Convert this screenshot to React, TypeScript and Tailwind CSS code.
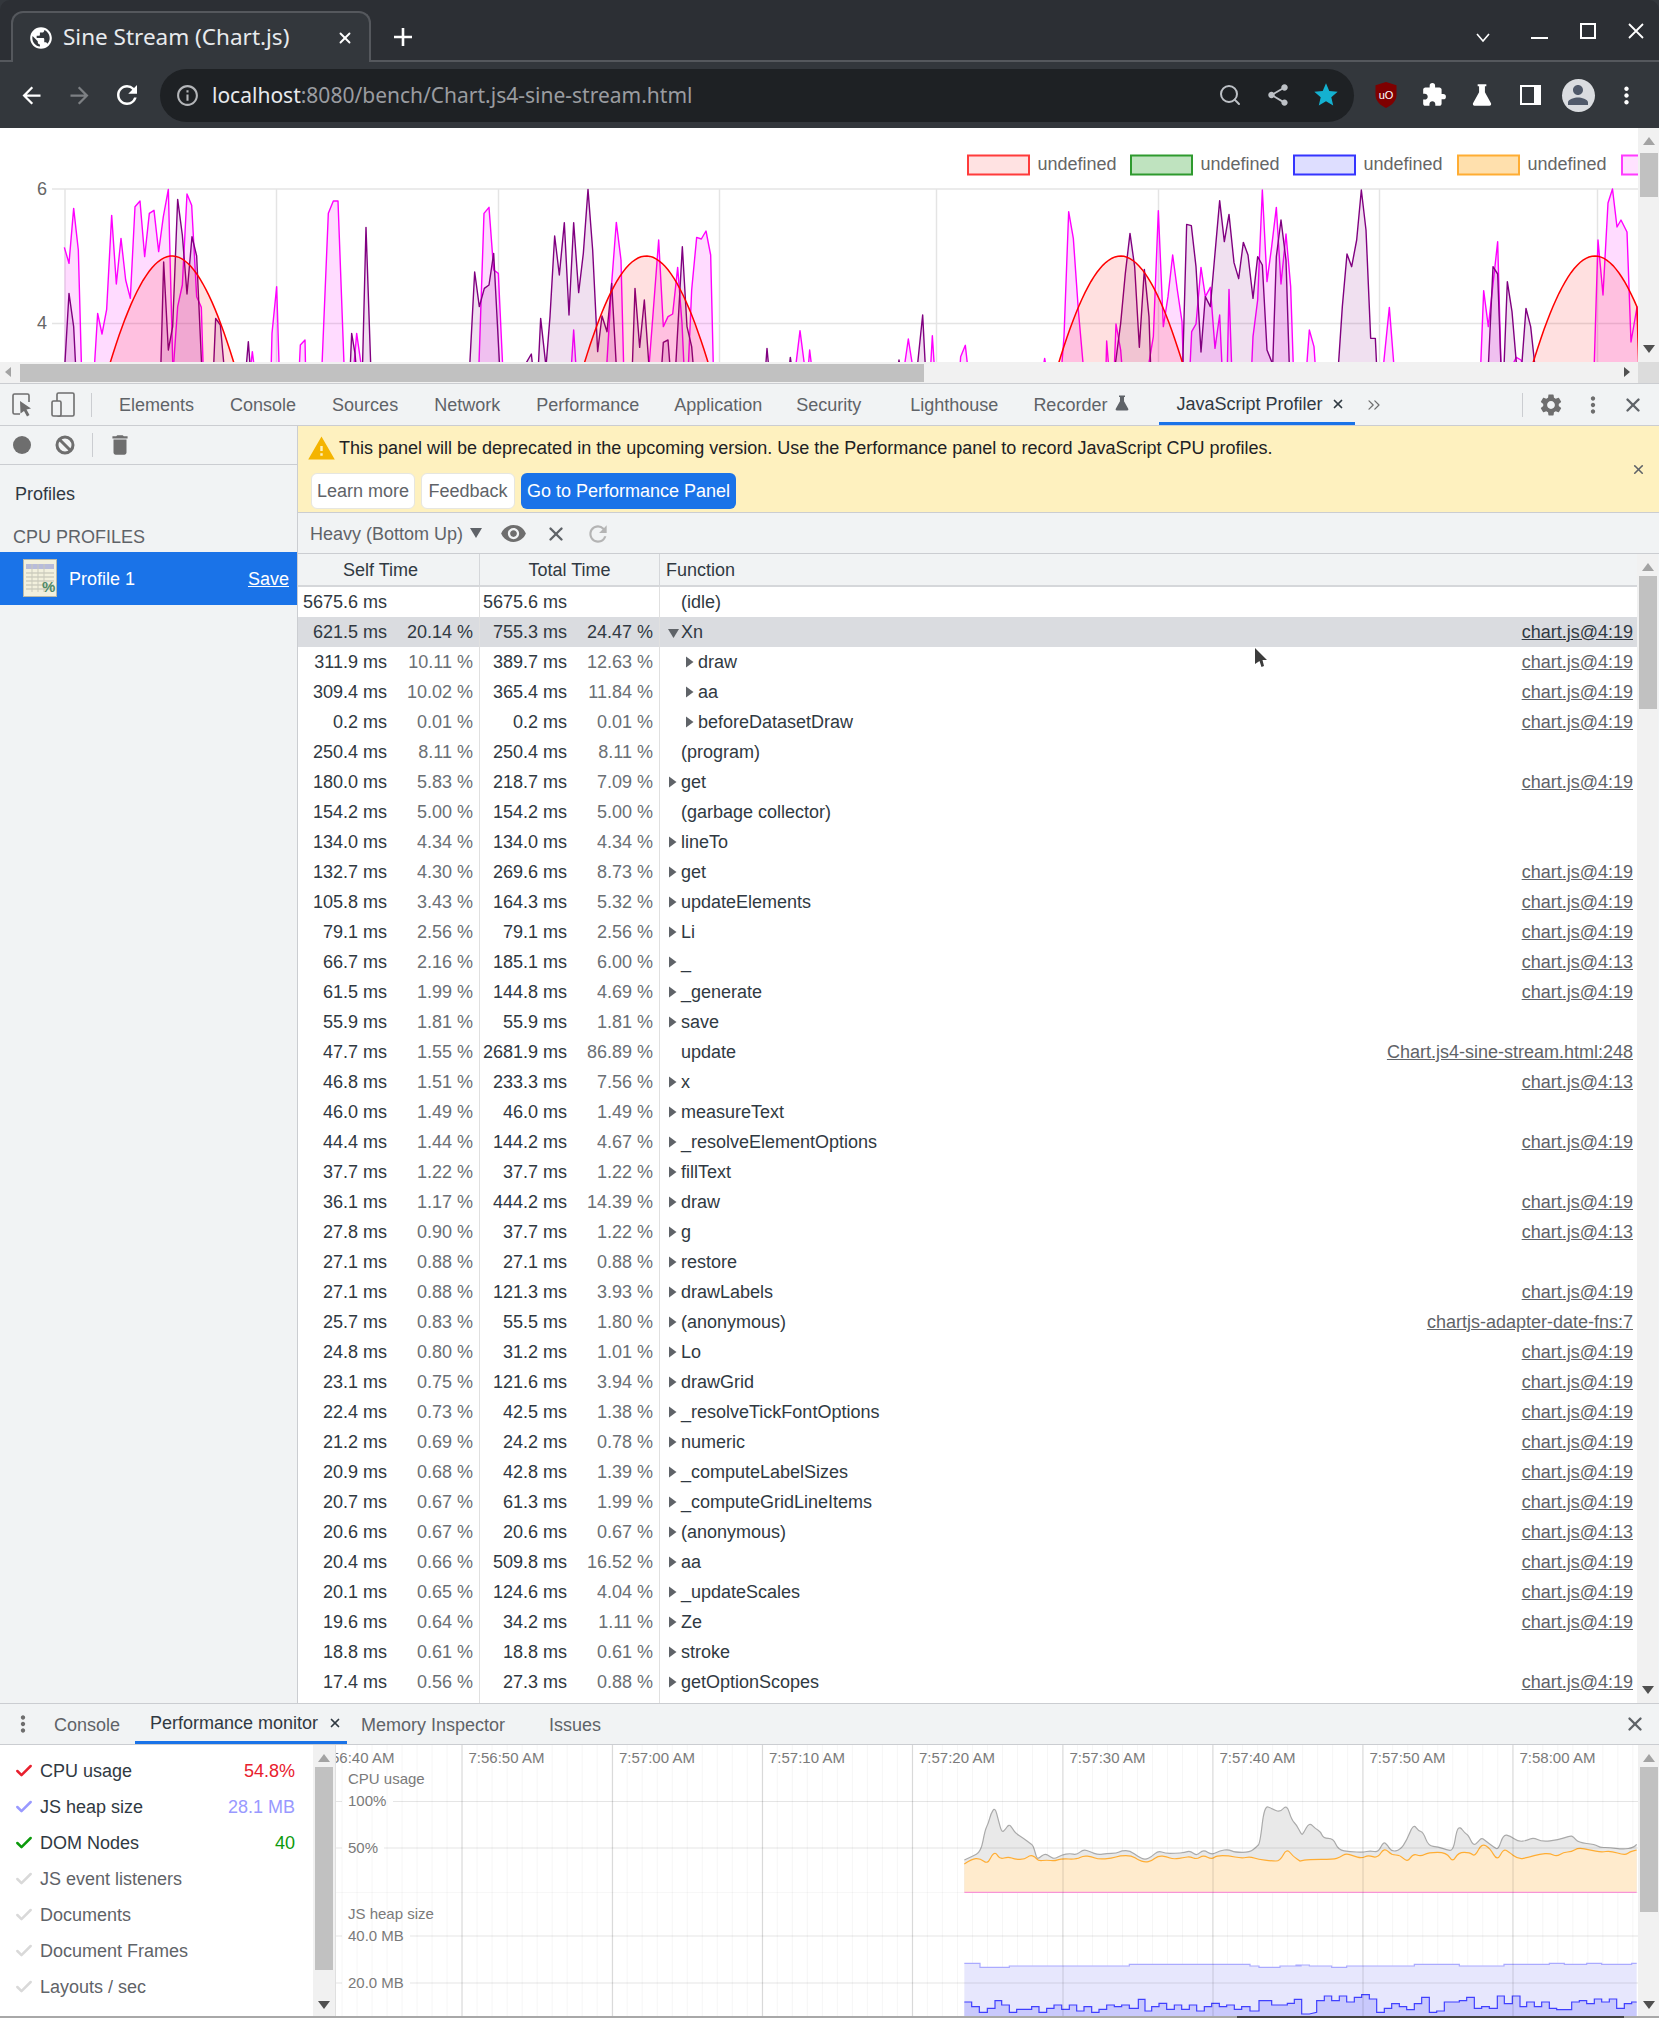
import { Check, ChevronsRight, Search, X } from 'lucide-react'
import { ReactNode } from 'react'
import {
  MdArrowBack,
  MdArrowForward,
  MdDelete,
  MdExtension,
  MdInfoOutline,
  MdMoreVert,
  MdPerson,
  MdPublic,
  MdRefresh,
  MdSettings,
  MdShare,
  MdStar,
  MdVisibility,
  MdWarning,
} from 'react-icons/md'

type Row = [string, string, string, string, string, string, number?]

const J19 = 'chart.js@4:19'
const J13 = 'chart.js@4:13'

// self, self %, total, total %, name, link. last: 0 no arrow, 1 arrow, 2 open, 3 child
const rows: Row[] = [
  ['5675.6 ms', '', '5675.6 ms', '', '(idle)', '', 0],
  ['621.5 ms', '20.14 %', '755.3 ms', '24.47 %', 'Xn', J19, 2],
  ['311.9 ms', '10.11 %', '389.7 ms', '12.63 %', 'draw', J19, 3],
  ['309.4 ms', '10.02 %', '365.4 ms', '11.84 %', 'aa', J19, 3],
  ['0.2 ms', '0.01 %', '0.2 ms', '0.01 %', 'beforeDatasetDraw', J19, 3],
  ['250.4 ms', '8.11 %', '250.4 ms', '8.11 %', '(program)', '', 0],
  ['180.0 ms', '5.83 %', '218.7 ms', '7.09 %', 'get', J19],
  ['154.2 ms', '5.00 %', '154.2 ms', '5.00 %', '(garbage collector)', '', 0],
  ['134.0 ms', '4.34 %', '134.0 ms', '4.34 %', 'lineTo', ''],
  ['132.7 ms', '4.30 %', '269.6 ms', '8.73 %', 'get', J19],
  ['105.8 ms', '3.43 %', '164.3 ms', '5.32 %', 'updateElements', J19],
  ['79.1 ms', '2.56 %', '79.1 ms', '2.56 %', 'Li', J19],
  ['66.7 ms', '2.16 %', '185.1 ms', '6.00 %', '_', J13],
  ['61.5 ms', '1.99 %', '144.8 ms', '4.69 %', '_generate', J19],
  ['55.9 ms', '1.81 %', '55.9 ms', '1.81 %', 'save', ''],
  ['47.7 ms', '1.55 %', '2681.9 ms', '86.89 %', 'update', 'Chart.js4-sine-stream.html:248', 0],
  ['46.8 ms', '1.51 %', '233.3 ms', '7.56 %', 'x', J13],
  ['46.0 ms', '1.49 %', '46.0 ms', '1.49 %', 'measureText', ''],
  ['44.4 ms', '1.44 %', '144.2 ms', '4.67 %', '_resolveElementOptions', J19],
  ['37.7 ms', '1.22 %', '37.7 ms', '1.22 %', 'fillText', ''],
  ['36.1 ms', '1.17 %', '444.2 ms', '14.39 %', 'draw', J19],
  ['27.8 ms', '0.90 %', '37.7 ms', '1.22 %', 'g', J13],
  ['27.1 ms', '0.88 %', '27.1 ms', '0.88 %', 'restore', ''],
  ['27.1 ms', '0.88 %', '121.3 ms', '3.93 %', 'drawLabels', J19],
  ['25.7 ms', '0.83 %', '55.5 ms', '1.80 %', '(anonymous)', 'chartjs-adapter-date-fns:7'],
  ['24.8 ms', '0.80 %', '31.2 ms', '1.01 %', 'Lo', J19],
  ['23.1 ms', '0.75 %', '121.6 ms', '3.94 %', 'drawGrid', J19],
  ['22.4 ms', '0.73 %', '42.5 ms', '1.38 %', '_resolveTickFontOptions', J19],
  ['21.2 ms', '0.69 %', '24.2 ms', '0.78 %', 'numeric', J19],
  ['20.9 ms', '0.68 %', '42.8 ms', '1.39 %', '_computeLabelSizes', J19],
  ['20.7 ms', '0.67 %', '61.3 ms', '1.99 %', '_computeGridLineItems', J19],
  ['20.6 ms', '0.67 %', '20.6 ms', '0.67 %', '(anonymous)', J13],
  ['20.4 ms', '0.66 %', '509.8 ms', '16.52 %', 'aa', J19],
  ['20.1 ms', '0.65 %', '124.6 ms', '4.04 %', '_updateScales', J19],
  ['19.6 ms', '0.64 %', '34.2 ms', '1.11 %', 'Ze', J19],
  ['18.8 ms', '0.61 %', '18.8 ms', '0.61 %', 'stroke', ''],
  ['17.4 ms', '0.56 %', '27.3 ms', '0.88 %', 'getOptionScopes', J19],
]

// traced chart segments, [x, y, x, y...] relative to a base point and a scale
const seg = (bx: number, by: number, s: number, raw: number[]) => {
  const out: string[] = []
  for (let i = 0; i < raw.length; i += 2) out.push(`${bx + raw[i] / s},${by + raw[i + 1] / s}`)
  return out.join(' ')
}
const a = (raw: number[]) => seg(0, 120, 3, raw)
const b = (raw: number[]) => seg(500, 180, 3, raw)
const c = (raw: number[]) => seg(1020, 180, 3, raw)

const magenta = [
  a([193, 382, 207, 430, 221, 265, 235, 390, 245, 760]),
  a([282, 760, 293, 580, 306, 642, 320, 568, 335, 286, 349, 492, 363, 355, 377, 480, 391, 535, 405, 260, 420, 243, 434, 410, 448, 280, 462, 271, 476, 395, 490, 290, 505, 208, 519, 760]),
  a([519, 760, 533, 560, 547, 495, 561, 222, 575, 256, 590, 530, 604, 562, 610, 760]),
  a([750, 760, 757, 695, 765, 760]),
  a([813, 760, 816, 640, 830, 500, 838, 760]),
  a([897, 760, 901, 675, 915, 660, 917, 760]),
  a([965, 760, 985, 280, 1000, 243, 1014, 243, 1033, 760]),
  a([1060, 760, 1070, 640, 1087, 760]),
  a([1436, 760, 1452, 280, 1467, 262, 1481, 450, 1495, 460, 1509, 760]),
  b([214, 560, 221, 450, 228, 560]),
  b([320, 560, 335, 310, 349, 127, 363, 240, 371, 560]),
  b([447, 560, 460, 390, 476, 180, 490, 440, 504, 410, 518, 402, 533, 262, 546, 430, 552, 560]),
  b([565, 560, 575, 330, 590, 172, 604, 177, 618, 153, 632, 225, 640, 560]),
  b([887, 560, 900, 452, 914, 560]),
  b([925, 560, 929, 510, 935, 560]),
  b([1213, 560, 1225, 477, 1238, 560]),
  b([1292, 560, 1297, 467, 1303, 560]),
  b([1380, 560, 1382, 530, 1396, 496, 1403, 560]),
  c([70, 560, 74, 535, 78, 560]),
  c([125, 560, 132, 470, 146, 95, 160, 175, 175, 390, 190, 560]),
  c([258, 560, 260, 483, 266, 560]),
  c([283, 560, 288, 432, 302, 510, 306, 560]),
  c([385, 560, 400, 470, 415, 92, 430, 440, 444, 350, 458, 225, 472, 330, 486, 425, 490, 560]),
  c([510, 560, 515, 455, 528, 432, 543, 262, 556, 350, 571, 322, 585, 505, 599, 405, 606, 560]),
  c([622, 560, 627, 328, 635, 560]),
  c([695, 560, 699, 470, 713, 360, 727, 30, 741, 305, 755, 200, 769, 82, 783, 312, 798, 162, 812, 320, 820, 560]),
  c([860, 560, 868, 450, 882, 500, 886, 560]),
  c([1090, 560, 1108, 382, 1122, 560]),
  c([1382, 560, 1391, 332, 1405, 440, 1433, 185, 1443, 560]),
  c([1475, 560, 1489, 532, 1503, 540, 1510, 560]),
  seg(0, 0, 1, [1594, 372, 1598, 240, 1603, 295, 1608, 203, 1612.5, 189, 1617, 227, 1621, 220, 1627, 232, 1631, 342, 1637, 307, 1640, 372]),
]

const purple = [
  a([193, 760, 207, 520, 221, 620, 228, 760]),
  a([482, 760, 491, 426, 505, 690, 518, 620, 533, 238, 547, 345, 561, 522, 576, 350, 590, 408, 606, 760]),
  a([640, 760, 647, 595, 661, 615, 674, 760]),
  a([737, 760, 745, 665, 752, 760]),
  a([1050, 760, 1055, 640, 1065, 700, 1070, 760]),
  a([1087, 760, 1098, 322, 1113, 760]),
  a([1408, 760, 1424, 456, 1438, 560, 1453, 505, 1467, 495, 1481, 400, 1500, 760]),
  b([72, 560, 94, 522, 98, 560]),
  b([115, 560, 122, 415, 138, 560]),
  b([138, 560, 150, 410, 164, 168, 178, 285, 193, 128, 207, 405, 221, 128, 236, 338, 250, 220, 264, 28, 278, 210, 293, 515, 306, 408, 321, 455, 335, 310, 349, 560]),
  b([397, 560, 405, 325, 419, 502, 433, 360, 447, 560]),
  b([485, 560, 490, 487, 504, 480, 510, 560]),
  b([527, 560, 547, 200, 561, 440, 575, 500, 580, 560]),
  b([797, 560, 801, 505, 806, 560]),
  b([868, 560, 871, 532, 875, 560]),
  b([1194, 560, 1197, 540, 1200, 560]),
  b([1252, 560, 1268, 405, 1276, 560]),
  c([285, 560, 302, 430, 316, 280, 330, 160, 344, 260, 358, 502, 373, 268, 387, 410, 392, 560]),
  c([488, 560, 500, 133, 514, 137, 528, 260, 543, 516, 556, 350, 571, 380, 585, 220, 599, 62, 613, 185, 627, 103, 642, 248, 656, 296, 670, 187, 684, 225, 699, 355, 713, 230, 727, 255, 741, 510, 755, 545, 758, 560]),
  c([758, 560, 769, 230, 783, 120, 798, 240, 808, 560]),
  c([955, 560, 967, 380, 981, 222, 995, 260, 1010, 180, 1024, 30, 1038, 150, 1052, 475, 1066, 475, 1070, 560]),
  c([1405, 560, 1419, 260, 1433, 282, 1443, 560]),
  c([1452, 560, 1462, 305, 1476, 395, 1490, 560]),
  c([1505, 560, 1518, 385, 1532, 440, 1545, 560]),
]

const sineWave = () => {
  const out: string[] = []
  for (let x = 65; x <= 1639; x += 3) {
    const v = 5 * Math.cos((2 * Math.PI * (x - 172)) / 474.3)
    out.push(`${x},${Math.min(323.3 - 67.3 * (v - 4), 375).toFixed(1)}`)
  }
  return `65,375 ${out.join(' ')} 1639,375`
}

// perf monitor traces, first part from x=955 and second from x=1300, both at 3x from y=1800
const toPoints = (raw1: number[], raw2: number[]) => {
  const out: [number, number][] = []
  for (let i = 0; i < raw1.length; i += 2) out.push([955 + raw1[i] / 3, 1800 + raw1[i + 1] / 3])
  for (let i = 0; i < raw2.length; i += 2) out.push([1300 + raw2[i] / 3, 1800 + raw2[i + 1] / 3])
  return out
}

const smooth = (p: [number, number][]) => {
  let d = `M${p[0][0]} ${p[0][1]}`
  for (let i = 1; i < p.length - 1; i++) {
    const mx = (p[i][0] + p[i + 1][0]) / 2
    const my = (p[i][1] + p[i + 1][1]) / 2
    d += ` Q${p[i][0]} ${p[i][1]} ${mx} ${my}`
  }
  const last = p[p.length - 1]
  return `${d} L${last[0]} ${last[1]}`
}

const stepped = (p: [number, number][]) => p.map((q) => `${q[0]},${q[1]}`).join(' ')

const cpuLine = toPoints(
  [28, 180, 50, 170, 78, 155, 90, 90, 100, 70, 108, 40, 120, 22, 130, 60, 140, 97, 150, 90, 162, 72, 172, 85, 182, 100, 205, 115, 225, 130, 235, 137, 245, 175, 252, 175, 270, 160, 285, 170, 298, 177, 320, 165, 345, 160, 365, 165, 385, 148, 405, 155, 430, 165, 455, 160, 485, 160, 500, 152, 525, 152, 550, 170, 570, 180, 590, 170, 610, 152, 630, 160, 660, 160, 690, 158, 705, 152, 725, 168, 745, 148, 770, 165, 795, 152, 820, 148, 840, 157, 885, 157, 905, 140, 915, 130, 928, 17, 950, 25, 975, 38, 995, 13, 1010, 60, 1025, 75, 1040, 105],
  [10, 100, 28, 67, 45, 85, 62, 95, 70, 115, 100, 115, 115, 150, 150, 155, 190, 157, 210, 152, 235, 157, 250, 125, 262, 135, 275, 155, 300, 150, 320, 122, 340, 72, 355, 92, 370, 97, 385, 138, 415, 140, 440, 150, 460, 152, 470, 90, 480, 80, 495, 100, 505, 105, 520, 138, 535, 125, 545, 113, 560, 125, 580, 140, 595, 150, 610, 103, 630, 108, 655, 125, 680, 122, 700, 112, 725, 125, 775, 120, 810, 107, 820, 110, 835, 128, 885, 133, 900, 143, 925, 142, 970, 148, 1000, 143, 1010, 133],
)
const scriptLine = toPoints(
  [28, 192, 50, 177, 75, 175, 98, 192, 110, 165, 122, 157, 135, 178, 160, 170, 180, 178, 210, 178, 225, 165, 240, 170, 250, 183, 275, 180, 298, 183, 318, 176, 365, 178, 385, 167, 410, 170, 430, 178, 470, 175, 495, 167, 530, 167, 550, 180, 570, 187, 590, 183, 610, 167, 635, 170, 655, 178, 690, 172, 705, 170, 725, 178, 745, 165, 770, 178, 785, 167, 820, 167, 860, 175, 885, 170, 910, 178, 950, 183, 975, 183, 995, 145, 1015, 170, 1035, 183],
  [0, 183, 25, 178, 100, 178, 120, 172, 138, 160, 160, 168, 185, 175, 205, 165, 232, 175, 253, 143, 275, 165, 300, 165, 322, 187, 340, 160, 362, 170, 385, 157, 440, 157, 458, 187, 475, 157, 510, 157, 525, 170, 545, 130, 570, 145, 592, 183, 610, 147, 625, 155, 655, 178, 685, 172, 720, 162, 750, 160, 770, 170, 790, 157, 815, 155, 835, 143, 870, 150, 905, 157, 930, 152, 975, 166, 990, 155, 1010, 150],
)
const heapLine = toPoints(
  [28, 490, 75, 490, 75, 502, 163, 502, 163, 498, 523, 498, 523, 493, 885, 493, 885, 498, 912, 498, 912, 502, 975, 502, 975, 498, 1040, 498],
  [-12, 498, -12, 495, 28, 495, 28, 498, 95, 498, 95, 502, 140, 502, 140, 498, 343, 498, 343, 493, 478, 493, 478, 498, 612, 498, 612, 493, 748, 493, 748, 490, 793, 490, 793, 493, 860, 493, 860, 490, 905, 490, 905, 493, 995, 493, 995, 490, 1010, 490],
)
const domLine = toPoints(
  [28, 606, 50, 606, 50, 620, 73, 620, 73, 637, 97, 637, 97, 625, 120, 625, 120, 602, 140, 602, 140, 615, 163, 615, 163, 637, 185, 637, 185, 628, 230, 628, 230, 620, 252, 620, 252, 637, 275, 637, 275, 625, 297, 625, 297, 615, 320, 615, 320, 628, 343, 628, 343, 615, 365, 615, 365, 633, 387, 633, 387, 620, 410, 620, 410, 637, 432, 637, 432, 628, 455, 628, 455, 615, 478, 615, 478, 620, 500, 620, 500, 615, 523, 615, 523, 625, 550, 625, 550, 598, 570, 598, 570, 633, 590, 633, 590, 620, 612, 620, 612, 610, 635, 610, 635, 628, 658, 628, 658, 615, 680, 615, 680, 628, 703, 628, 703, 615, 725, 615, 725, 633, 748, 633, 748, 620, 770, 620, 770, 610, 793, 610, 793, 620, 815, 620, 815, 615, 838, 615, 838, 628, 860, 628, 860, 620, 885, 620, 885, 633, 912, 633, 912, 602, 950, 602, 950, 615, 997, 615, 997, 610, 1018, 610, 1018, 598, 1040, 598, 1040, 642],
  [28, 642, 50, 637, 50, 602, 73, 602, 73, 588, 95, 588, 95, 602, 118, 602, 118, 588, 140, 588, 140, 606, 163, 606, 163, 592, 185, 592, 185, 584, 208, 584, 208, 597, 230, 597, 230, 637, 253, 637, 253, 625, 275, 625, 275, 611, 298, 611, 298, 620, 320, 620, 320, 629, 343, 629, 343, 611, 365, 611, 365, 592, 388, 592, 388, 637, 410, 637, 410, 633, 433, 633, 433, 606, 478, 606, 478, 602, 500, 602, 500, 592, 523, 592, 523, 625, 545, 625, 545, 620, 568, 620, 568, 625, 592, 625, 592, 588, 613, 588, 613, 611, 637, 611, 637, 588, 660, 588, 660, 620, 680, 620, 680, 606, 703, 606, 703, 620, 725, 620, 725, 606, 748, 606, 748, 625, 770, 625, 770, 629, 815, 629, 815, 606, 838, 606, 838, 602, 860, 602, 860, 611, 883, 611, 883, 597, 905, 597, 905, 606, 928, 606, 928, 597, 950, 597, 950, 625, 973, 625, 973, 611, 995, 611, 995, 606, 1010, 606],
)

const legend: [number, string, string][] = [
  [968, '#ff3b3b', '#ffe2e2'],
  [1131, '#2e9a2e', '#bfe3bf'],
  [1294, '#3535ff', '#dedeff'],
  [1458, '#ffad33', '#ffe0ad'],
  [1622, '#ff3bff', '#ffe2ff'],
]

// fill goes down below the clip, the line stays open so no closing edge shows
function Series({ list, stroke, fill }: { list: string[]; stroke: string; fill: string }) {
  return (
    <>
      {list.map((p, i) => (
        <g key={i}>
          <polygon points={`${p.split(' ')[0].split(',')[0]},375 ${p}`} fill={fill} />
          <polyline points={p} fill="none" stroke={stroke} strokeWidth={1.4} strokeLinejoin="round" />
        </g>
      ))}
    </>
  )
}

function TopChart() {
  return (
    <svg viewBox="0 128 1638 234" width={1638} height={234} className="block">
      {[65, 276.5, 498.5, 719.5, 936.5, 1158.5, 1379.5, 1597.5].map((x) => (
        <line key={x} x1={x} x2={x} y1={189} y2={362} stroke="#e4e4e4" strokeWidth={1.5} />
      ))}
      <line x1={52} x2={1638} y1={189} y2={189} stroke="#e4e4e4" strokeWidth={1.5} />
      <line x1={52} x2={1638} y1={323.5} y2={323.5} stroke="#e4e4e4" strokeWidth={1.5} />
      <text x={47} y={194.5} textAnchor="end" fontSize={18} fill="#666">6</text>
      <text x={47} y={329} textAnchor="end" fontSize={18} fill="#666">4</text>
      {legend.map(([x, stroke, fill]) => (
        <g key={x}>
          <rect x={x} y={155.5} width={61} height={19} fill={fill} stroke={stroke} strokeWidth={2} />
          {x < 1600 && (
            <text x={x + 69.5} y={170} fontSize={18} fill="#666">undefined</text>
          )}
        </g>
      ))}
      <Series list={magenta} stroke="#ff00ff" fill="rgba(255,0,255,0.14)" />
      <Series list={purple} stroke="#800080" fill="rgba(128,0,128,0.12)" />
      <polygon points={sineWave()} fill="rgba(255,0,0,0.12)" stroke="#ff0000" strokeWidth={1.5} />
    </svg>
  )
}

function PerfChart() {
  const minor: number[] = []
  for (let x = 342; x < 1638; x += 15.01) minor.push(x)
  const major = [312, 462, 612.5, 762.5, 912.5, 1063, 1213, 1363, 1513]
  const labels = ['7:56:40 AM', '7:56:50 AM', '7:57:00 AM', '7:57:10 AM', '7:57:20 AM', '7:57:30 AM', '7:57:40 AM', '7:57:50 AM', '7:58:00 AM']
  const start = cpuLine[0][0]
  const end = cpuLine[cpuLine.length - 1][0]
  return (
    <svg viewBox="336 1745 1302 271" width={1302} height={271} className="block">
      {minor.map((x) => (
        <line key={x} x1={x} x2={x} y1={1745} y2={2016} stroke="#f6f6f6" />
      ))}
      <path d={`${smooth(cpuLine)} L${end} 1892 L${start} 1892 Z`} fill="#e9e9e9" />
      <path d={smooth(cpuLine)} fill="none" stroke="#aaaaaa" strokeWidth={1.2} />
      <path d={`${smooth(scriptLine)} L${end} 1892 L${start} 1892 Z`} fill="#ffebcd" />
      <path d={smooth(scriptLine)} fill="none" stroke="#ffad33" strokeWidth={1.2} />
      <line x1={start} x2={end} y1={1892.3} y2={1892.3} stroke="#ff99dd" strokeWidth={1.2} />
      <polygon points={`${start},2016 ${stepped(heapLine)} ${end},2016`} fill="#e7e7fd" />
      <polyline points={stepped(heapLine)} fill="none" stroke="#aaaaff" strokeWidth={1.2} />
      <polygon points={`${start},2016 ${stepped(domLine)} ${end},2016`} fill="#c9c9fc" />
      <polyline points={stepped(domLine)} fill="none" stroke="#4040ff" strokeWidth={1.2} />
      {major.map((x) => (
        <line key={x} x1={x} x2={x} y1={1745} y2={2016} stroke="rgba(0,0,0,0.12)" strokeWidth={1.2} />
      ))}
      <line x1={393} x2={1638} y1={1801.5} y2={1801.5} stroke="rgba(0,0,0,0.1)" strokeWidth={1.2} />
      <line x1={384} x2={1638} y1={1848} y2={1848} stroke="rgba(0,0,0,0.1)" strokeWidth={1.2} />
      <line x1={336} x2={1638} y1={1892.5} y2={1892.5} stroke="rgba(0,0,0,0.03)" />
      <line x1={410} x2={1638} y1={1936} y2={1936} stroke="rgba(0,0,0,0.1)" strokeWidth={1.2} />
      <line x1={410} x2={1638} y1={1983} y2={1983} stroke="rgba(0,0,0,0.1)" strokeWidth={1.2} />
      {[1801.5, 1848, 1936, 1983].map((y) => (
        <line key={y} x1={336} x2={342} y1={y} y2={y} stroke="rgba(0,0,0,0.1)" />
      ))}
      {labels.map((t, i) => (
        <text key={t} x={major[i] + 6.5} y={1763} fontSize={15} fill="#7a7a7a">{t}</text>
      ))}
      <text x={348} y={1784} fontSize={15} fill="#7a7a7a">CPU usage</text>
      <text x={348} y={1806} fontSize={15} fill="#7a7a7a">100%</text>
      <text x={348} y={1853} fontSize={15} fill="#7a7a7a">50%</text>
      <text x={348} y={1919} fontSize={15} fill="#7a7a7a">JS heap size</text>
      <text x={348} y={1941} fontSize={15} fill="#7a7a7a">40.0 MB</text>
      <text x={348} y={1988} fontSize={15} fill="#7a7a7a">20.0 MB</text>
    </svg>
  )
}

function Flask({ className }: { className: string }) {
  return (
    <svg viewBox="0 0 24 24" className={className} fill="currentColor">
      <path d="M8 2h8v2h-1.3v5.5l5.6 10.2A1.6 1.6 0 0 1 18.9 22H5.1a1.6 1.6 0 0 1-1.4-2.3L9.3 9.5V4H8z" />
    </svg>
  )
}

function VTriangle({ up, className }: { up?: boolean; className?: string }) {
  return (
    <svg viewBox="0 0 14 10" className={`w-[14px] h-[10px] ${className ?? ''}`} fill="currentColor">
      <polygon points={up ? '7,1 13,9 1,9' : '1,1 13,1 7,9'} />
    </svg>
  )
}

// scrollbar column on the right of a pane; thumb offset and height come as full classes
function VScroll({ thumb, bottom }: { thumb: string; bottom: string }) {
  return (
    <div className="w-[21px] shrink-0 bg-[#f1f1f1] flex flex-col items-center">
      <VTriangle up className="mt-2 text-[#a3a3a3]" />
      <div className={`w-[18px] bg-[#c1c1c1] ${thumb}`} />
      <VTriangle className={`mt-auto text-[#505050] ${bottom}`} />
    </div>
  )
}

function CellTime({ time, pct, selected, timeW, border }: { time: string; pct: string; selected: boolean; timeW: string; border: string }) {
  return (
    <div className={`flex items-center shrink-0 h-full border-r border-[#e0e0e0] ${border}`}>
      <span className={`${timeW} whitespace-nowrap text-right text-[#303942]`}>{time}</span>
      <span className={`flex-1 text-right pr-[6px] ${selected ? 'text-[#303942]' : 'text-[#6b7075]'}`}>{pct}</span>
    </div>
  )
}

function Arrow({ kind }: { kind: number }) {
  if (kind === 2) {
    return (
      <svg viewBox="0 0 12 12" className="w-[12px] h-[12px] text-[#5f6368] mt-[3px] -ml-px mr-px" fill="currentColor">
        <polygon points="0,2 11,2 5.5,11" />
      </svg>
    )
  }
  if (kind === 0) return <span className="w-[12px]" />
  return (
    <svg viewBox="0 0 12 12" className="w-[12px] h-[12px] text-[#5f6368]" fill="currentColor">
      <polygon points="0,0.5 7.500,6 0,11.5" />
    </svg>
  )
}

function TableRow({ row, selected }: { row: Row; selected: boolean }) {
  const [self, selfPct, total, totalPct, name, link, kind = 1] = row
  return (
    <div className={`flex h-[30px] shrink-0 items-center ${selected ? 'bg-[#dadce0]' : 'bg-white'}`}>
      <CellTime time={self} pct={selfPct} selected={selected} timeW="w-[89px] pb-px" border="w-[182px]" />
      <CellTime time={total} pct={totalPct} selected={selected} timeW="w-[87px] pb-px" border="w-[180px]" />
      <div className={`flex-1 flex items-center min-w-0 h-full pb-px ${kind === 3 ? 'pl-[26px]' : 'pl-[9px]'}`}>
        <Arrow kind={kind === 3 ? 1 : kind} />
        <span className="text-[#303942]">{name}</span>
        <span className={`ml-auto pr-1 underline ${selected ? 'text-[#303942]' : 'text-[#5f6368]'}`}>{link}</span>
      </div>
    </div>
  )
}

function ProfileIcon() {
  return (
    <svg viewBox="0 0 34 38" className="w-[34px] h-[38px] absolute left-[23px] top-[7px]">
      <rect x={0.5} y={0.5} width={33} height={37} fill="#f2f0dd" stroke="#b9b9a8" />
      <rect x={3} y={5} width={28} height={5} fill="#b8bcd9" />
      {[14, 18, 22, 26, 30].map((y) => (
        <line key={y} x1={3} x2={31} y1={y} y2={y} stroke="#bdbdb0" />
      ))}
      {[9, 15, 21].map((x) => (
        <line key={x} x1={x} x2={x} y1={5} y2={33} stroke="#c9c9bb" />
      ))}
      <text x={19} y={33} fontSize={15} fontWeight={700} fill="#4f8a68">%</text>
    </svg>
  )
}

function UBlock() {
  return (
    <span className="relative flex items-center justify-center w-[22px] h-[26px]">
      <svg viewBox="0 0 22 26" className="w-[22px] h-[26px] absolute inset-0">
        <path d="M11 0l10.5 3.2v9.6c0 6-4.3 10.4-10.5 13.2C4.800 23.200.5 18.800.5 12.800V3.200z" fill="#7f0000" />
      </svg>
      <span className="relative text-[11px] leading-none text-white">uO</span>
    </span>
  )
}

function ToolCell({ children, className = 'w-[48px]' }: { children: ReactNode; className?: string }) {
  return <span className={`${className} shrink-0 flex items-center justify-center`}>{children}</span>
}

function BrowserChrome() {
  return (
    <div className="h-[128px] bg-[#33373c] text-white">
      <div className="h-[62px] flex items-end bg-[#2c2f34] border-b-2 border-[#55585d] rounded-t-[10px] pl-[11px]">
        <div className="w-[360px] h-[51px] -mb-[2px] flex items-center bg-[#33373c] border-2 border-b-0 border-[#55585d] rounded-t-[12px]">
          <MdPublic size={26} className="ml-[15px]" />
          <span className="ml-[9px] font-['Noto_Sans',sans-serif] text-[22.5px] text-[#e8eaed]">Sine Stream (Chart.js)</span>
          <X size={18} strokeWidth={2.5} className="ml-auto mr-[15px]" />
        </div>
        <svg viewBox="0 0 20 20" className="w-[20px] h-[20px] ml-[22px] mb-[13px]" stroke="currentColor" strokeWidth={2.6}>
          <path d="M10 1v18M1 10h18" />
        </svg>
        <span className="ml-auto mb-[17px] flex">
          <svg viewBox="0 0 14 10" className="w-[14px] h-[10px]" fill="none" stroke="currentColor" strokeWidth={1.6}>
            <path d="M1 1l6 7 6-7" />
          </svg>
        </span>
        <span className="ml-[41px] w-[17px] h-[2px] bg-white mb-[21px]" />
        <span className="ml-[32px] w-[16px] h-[16px] border-2 border-white mb-[21px]" />
        <svg viewBox="0 0 18 16" className="ml-[31px] w-[18px] h-[16px] mb-[21px] mr-[14px]" stroke="currentColor" strokeWidth={1.8}>
          <path d="M2 1l14 14M16 1L2 15" />
        </svg>
      </div>
      <div className="h-[66px] flex items-center pl-[7px]">
        <ToolCell><MdArrowBack size={27} /></ToolCell>
        <ToolCell><MdArrowForward size={27} className="text-[#7d8084]" /></ToolCell>
        <ToolCell><MdRefresh size={30} /></ToolCell>
        <div className="ml-[9px] w-[1194px] h-[53px] rounded-full bg-[#1e2124] flex items-center pl-[15px]">
          <MdInfoOutline size={25} className="text-[#b4b6b9]" />
          <span className="ml-[12px] font-['Noto_Sans',sans-serif] text-[21px] text-[#e8eaed]">
            localhost<span className="text-[#9a9ca0]">:8080/bench/Chart.js4-sine-stream.html</span>
          </span>
          <span className="ml-auto flex pr-[4px]">
            <ToolCell><Search size={24} strokeWidth={2} className="text-[#bdc1c6]" /></ToolCell>
            <ToolCell><MdShare size={26} className="text-[#bdc1c6]" /></ToolCell>
            <ToolCell><MdStar size={28} className="text-[#14b1d0]" /></ToolCell>
          </span>
        </div>
        <span className="flex ml-[8px]">
          <ToolCell><UBlock /></ToolCell>
          <ToolCell><MdExtension size={26} /></ToolCell>
          <ToolCell><Flask className="w-[26px] h-[26px]" /></ToolCell>
          <ToolCell>
            <span className="w-[21px] h-[20px] border-2 border-r-[7px] border-white" />
          </ToolCell>
          <ToolCell>
            <span className="w-[33px] h-[33px] rounded-full bg-[#dadce0] flex items-center justify-center overflow-hidden">
              <MdPerson size={30} className="text-[#50596a]" />
            </span>
          </ToolCell>
          <ToolCell><MdMoreVert size={27} /></ToolCell>
        </span>
      </div>
    </div>
  )
}

function PageArea() {
  return (
    <div>
      <div className="flex h-[234px] bg-white">
        <TopChart />
        <VScroll thumb="mt-[7px] h-[44px]" bottom="mb-[8px]" />
      </div>
      <div className="flex h-[22px] border-b border-[#cbcdd1]">
        <div className="w-[1638px] bg-[#f1f1f1] flex items-end relative">
          <span className="absolute left-[5px] top-[5px] w-0 h-0 border-y-[5px] border-y-transparent border-r-[6px] border-r-[#a3a3a3]" />
          <div className="ml-[20px] w-[904px] h-[18px] mb-px bg-[#c1c1c1]" />
          <span className="absolute right-[8px] top-[5px] w-0 h-0 border-y-[5px] border-y-transparent border-l-[6px] border-l-[#505050]" />
        </div>
        <div className="w-[21px] bg-[#dcdcdc]" />
      </div>
    </div>
  )
}

function InspectIcon() {
  return (
    <svg viewBox="0 0 22 26" className="w-[22px] h-[26px]" fill="none" stroke="#6e6e6e" strokeWidth={1.6}>
      <path d="M9 22H3.500A1.500 1.500 0 0 1 2 20.500V3.500A1.500 1.500 0 0 1 3.500 2h13A1.500 1.500 0 0 1 18 3.500V10" />
      <polygon points="9,9 20,16.500 15.500,17.500 18.500,23 16,24.500 13,19 9.500,21.500" fill="#6e6e6e" stroke="none" />
    </svg>
  )
}

function DeviceIcon() {
  return (
    <svg viewBox="0 0 24 25" className="w-[24px] h-[25px]" fill="none" stroke="#6e6e6e" strokeWidth={1.6}>
      <rect x={6} y={1} width={17} height={23} rx={1.5} />
      <rect x={1} y={9} width={9} height={15} rx={1.5} fill="#f1f3f4" />
    </svg>
  )
}

function MainTabs() {
  const tab = 'pr-[36px] pt-px text-[#5f6368]'
  return (
    <div className="h-[42px] flex items-center bg-[#f1f3f4] border-b border-[#cbcdd1]">
      <span className="ml-[11px] w-[22px] flex"><InspectIcon /></span>
      <span className="ml-[18px] w-[24px] flex"><DeviceIcon /></span>
      <span className="ml-[16px] w-[1px] h-[24px] bg-[#cbcdd1]" />
      <span className={`ml-[27px] ${tab}`}>Elements</span>
      <span className={tab}>Console</span>
      <span className={tab}>Sources</span>
      <span className={tab}>Network</span>
      <span className="pr-[35px] pt-px text-[#5f6368]">Performance</span>
      <span className="pr-[34px] pt-px text-[#5f6368]">Application</span>
      <span className="pr-[49px] pt-px text-[#5f6368]">Security</span>
      <span className="pr-[35px] pt-px text-[#5f6368]">Lighthouse</span>
      <span className="flex items-center pt-px text-[#5f6368] pr-[28px]">
        Recorder
        <Flask className="w-[18px] h-[18px] ml-[6px] -mt-1" />
      </span>
      <span className="flex items-center h-full pt-px pl-[17px] w-[196px] border-b-[3px] border-[#1a73e8] text-[#303942]">
        JavaScript Profiler
        <X size={14} strokeWidth={3} className="ml-[9px]" />
      </span>
      <ChevronsRight size={20} strokeWidth={1.5} className="ml-[9px] text-[#6e6e6e]" />
      <span className="ml-[138px] w-[1px] h-[24px] bg-[#cbcdd1]" />
      <span className="ml-[15px] flex"><MdSettings size={26} className="text-[#6e6e6e]" /></span>
      <span className="ml-[16px] flex"><MdMoreVert size={26} className="text-[#6e6e6e]" /></span>
      <span className="ml-[16px] flex"><X size={22} strokeWidth={2.6} className="text-[#5f6368]" /></span>
    </div>
  )
}

function Sidebar() {
  return (
    <div className="w-[298px] shrink-0 bg-[#f1f3f4] border-r border-[#cbcdd1]">
      <div className="h-[39px] flex items-center border-b border-[#cbcdd1]">
        <span className="ml-[13px] w-[18px] h-[18px] rounded-full bg-[#6e6e6e]" />
        <svg viewBox="0 0 20 20" className="ml-[24px] w-[20px] h-[20px]" fill="none" stroke="#6e6e6e" strokeWidth={3}>
          <circle cx={10} cy={10} r={8} />
          <path d="M4.500 4.500l11 11" />
        </svg>
        <span className="ml-[17px] w-[1px] h-[24px] bg-[#cbcdd1]" />
        <MdDelete size={26} className="ml-[14px] text-[#6e6e6e]" />
      </div>
      <div className="pl-[15px] mt-[17px] leading-[24px] text-[#303942]">Profiles</div>
      <div className="pl-[13px] mt-[19px] leading-[24px] text-[#5f6368]">CPU PROFILES</div>
      <div className="relative mt-[3px] h-[53px] bg-[#1a73e8] text-white flex items-center pl-[69px] pr-[8px]">
        <ProfileIcon />
        Profile 1
        <span className="ml-auto underline">Save</span>
      </div>
    </div>
  )
}

function Banner() {
  return (
    <div className="h-[87px] bg-[#fef1bf] border-b border-[#cbcdd1] relative">
      <div className="flex items-center h-[44px] pl-[9px]">
        <MdWarning size={29} className="text-[#f4b400]" />
        <span className="ml-[3px] text-[#202124]">
          This panel will be deprecated in the upcoming version. Use the Performance panel to record JavaScript CPU profiles.
        </span>
      </div>
      <div className="flex gap-[6px] pl-[13px] mt-[3px] h-[36px]">
        <span className="w-[104px] flex items-center justify-center rounded-md bg-white border border-[#e6e6e0] text-[#5f6368]">Learn more</span>
        <span className="w-[94px] flex items-center justify-center rounded-md bg-white border border-[#e6e6e0] text-[#5f6368]">Feedback</span>
        <span className="w-[215px] flex items-center justify-center rounded-md bg-[#1a73e8] text-white">Go to Performance Panel</span>
      </div>
      <X size={15} strokeWidth={2.6} className="absolute right-[13px] top-[36px] text-[#5f6368]" />
    </div>
  )
}

function ProfileTable() {
  return (
    <div className="flex flex-1 min-h-0 border-t border-[#cbcdd1] bg-[#f1f3f4]">
      <div className="w-[1339px] shrink-0 flex flex-col overflow-hidden">
        <div className="flex h-[33px] shrink-0 items-center border-b-2 border-[#d5d7da] text-[#303942]">
          <span className="w-[182px] h-full flex items-center justify-center pr-[16px] border-r border-[#d5d7da]">Self Time</span>
          <span className="w-[180px] h-full flex items-center justify-center border-r border-[#d5d7da]">Total Time</span>
          <span className="pl-[6px]">Function</span>
        </div>
        {rows.map((row, i) => (
          <TableRow key={i} row={row} selected={i === 1} />
        ))}
        <div className="flex flex-1 bg-white">
          <span className="w-[182px] border-r border-[#e0e0e0]" />
          <span className="w-[180px] border-r border-[#e0e0e0]" />
        </div>
      </div>
      <VScroll thumb="mt-[4px] h-[133px]" bottom="mb-[8px]" />
    </div>
  )
}

function ProfilerPanel() {
  return (
    <div className="flex-1 min-w-0 flex flex-col">
      <Banner />
      <div className="h-[40px] flex items-center bg-[#f1f3f4] pl-[12px] pt-px text-[#5f6368]">
        Heavy (Bottom Up)
        <svg viewBox="0 0 12 10" className="w-[12px] h-[10px] ml-[7px] -mt-[2px]" fill="currentColor">
          <polygon points="0,0 12,0 6,10" />
        </svg>
        <MdVisibility size={27} className="ml-[18px] text-[#6e6e6e]" />
        <X size={22} strokeWidth={2.6} className="ml-[18px] text-[#5f6368]" />
        <MdRefresh size={26} className="ml-[18px] text-[#b4b4b4]" />
      </div>
      <ProfileTable />
    </div>
  )
}

const metrics: [string, string, string, string][] = [
  ['CPU usage', '54.8%', 'text-[#e8202e]', 'text-[#303942]'],
  ['JS heap size', '28.1 MB', 'text-[#9999ff]', 'text-[#303942]'],
  ['DOM Nodes', '40', 'text-[#0c9a0c]', 'text-[#303942]'],
  ['JS event listeners', '', 'text-[#d9d9d9]', 'text-[#5f6368]'],
  ['Documents', '', 'text-[#d9d9d9]', 'text-[#5f6368]'],
  ['Document Frames', '', 'text-[#d9d9d9]', 'text-[#5f6368]'],
  ['Layouts / sec', '', 'text-[#d9d9d9]', 'text-[#5f6368]'],
]

function Drawer() {
  return (
    <div className="border-t border-[#cbcdd1]">
      <div className="h-[41px] flex items-center bg-[#f1f3f4] border-b border-[#cbcdd1] text-[#5f6368]">
        <span className="w-[46px] flex justify-center"><MdMoreVert size={26} className="text-[#6e6e6e]" /></span>
        <span className="ml-[8px] pt-px">Console</span>
        <span className="ml-[15px] h-full w-[212px] pl-[15px] pt-px flex items-center border-b-[3px] border-[#1a73e8] text-[#303942]">
          Performance monitor
          <X size={14} strokeWidth={3} className="ml-[10px]" />
        </span>
        <span className="ml-[14px] pt-px">Memory Inspector</span>
        <span className="ml-[44px] pt-px">Issues</span>
        <X size={22} strokeWidth={2.6} className="ml-auto mr-[13px] text-[#5f6368]" />
      </div>
      <div className="flex h-[271px] bg-white">
        <div className="w-[313px] shrink-0 pt-[8px] pl-[14px] pr-[18px]">
          {metrics.map(([label, value, color, labelColor]) => (
            <div key={label} className="flex items-center h-[36px]">
              <Check size={20} strokeWidth={3} className={color} />
              <span className={`ml-[6px] ${labelColor}`}>{label}</span>
              <span className={`ml-auto ${color}`}>{value}</span>
            </div>
          ))}
        </div>
        <div className="w-[23px] shrink-0 bg-[#f1f1f1] border-r border-[#e0e0e0] flex flex-col items-center">
          <VTriangle up className="mt-2 text-[#a3a3a3]" />
          <div className="w-[18px] mt-[4px] h-[203px] bg-[#c1c1c1]" />
          <VTriangle className="mt-auto mb-[6px] text-[#505050]" />
        </div>
        <PerfChart />
        <VScroll thumb="mt-[4px] h-[145px]" bottom="mb-[6px]" />
      </div>
      <div className="flex h-[2px] bg-[#a8a8a8]">
        <span className="ml-[1237px] w-[387px] bg-[#444]" />
      </div>
    </div>
  )
}

export default function App() {
  return (
    <div className="relative w-[1659px] h-[2018px] overflow-hidden bg-[#202124] font-['Liberation_Sans',Arial,sans-serif] text-[18px] leading-none">
      <BrowserChrome />
      <PageArea />
      <MainTabs />
      <div className="flex h-[1277px] bg-[#f1f3f4]">
        <Sidebar />
        <ProfilerPanel />
      </div>
      <Drawer />
      {/* mouse pointer sitting over the table */}
      <svg viewBox="0 0 12 19" className="absolute left-[1255px] top-[648px] w-[12px] h-[19px]">
        <polygon points="0,0 12,12 7.500,12 9,18 6.500,19 4.500,13 0,16" fill="#3c3c3c" />
      </svg>
    </div>
  )
}
